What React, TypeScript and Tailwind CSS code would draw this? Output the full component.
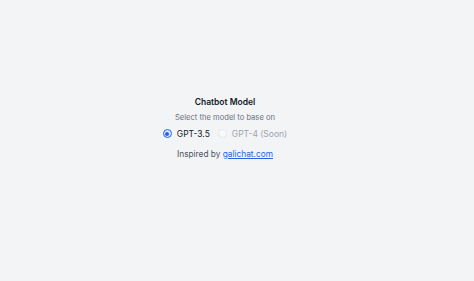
export default function App() {
  return (
    <div
      className="flex h-[281px] w-full items-center justify-center bg-[#f3f4f6] pr-[24px] text-[#111827]"
      style={{ fontFamily: "Inter, 'Liberation Sans', sans-serif" }}
    >
      <div className="-mt-[26px] flex flex-col items-center">
        <h1 className="text-[8.5px] font-semibold leading-[12px] text-[#111827]">Chatbot Model</h1>
        <p className="mt-[5px] text-[7.6px] leading-[10px] text-[#6b7280]">Select the model to base on</p>
        <div className="mt-[5px] flex items-center gap-[8px] text-[8.5px] leading-[12px]">
          <label className="flex items-center gap-[5px]">
            <span className="flex h-[9px] w-[9px] items-center justify-center rounded-full border-[1.5px] border-[#2563eb] bg-[#dbeafe]">
              <span className="h-[4px] w-[4px] rounded-full bg-[#2563eb]" />
            </span>
            <span className="text-[#111827]">GPT-3.5</span>
          </label>
          <label className="flex items-center gap-[5px]">
            <span className="h-[9px] w-[9px] rounded-full border border-[#e5e7eb] bg-[#f9fafb]" />
            <span className="text-[#9ca3af]">GPT-4 (Soon)</span>
          </label>
        </div>
        <p className="mt-[8px] text-[8.3px] leading-[12px] text-[#4b5563]">
          Inspired by <a className="text-[#2563eb] underline">galichat.com</a>
        </p>
      </div>
    </div>
  );
}
